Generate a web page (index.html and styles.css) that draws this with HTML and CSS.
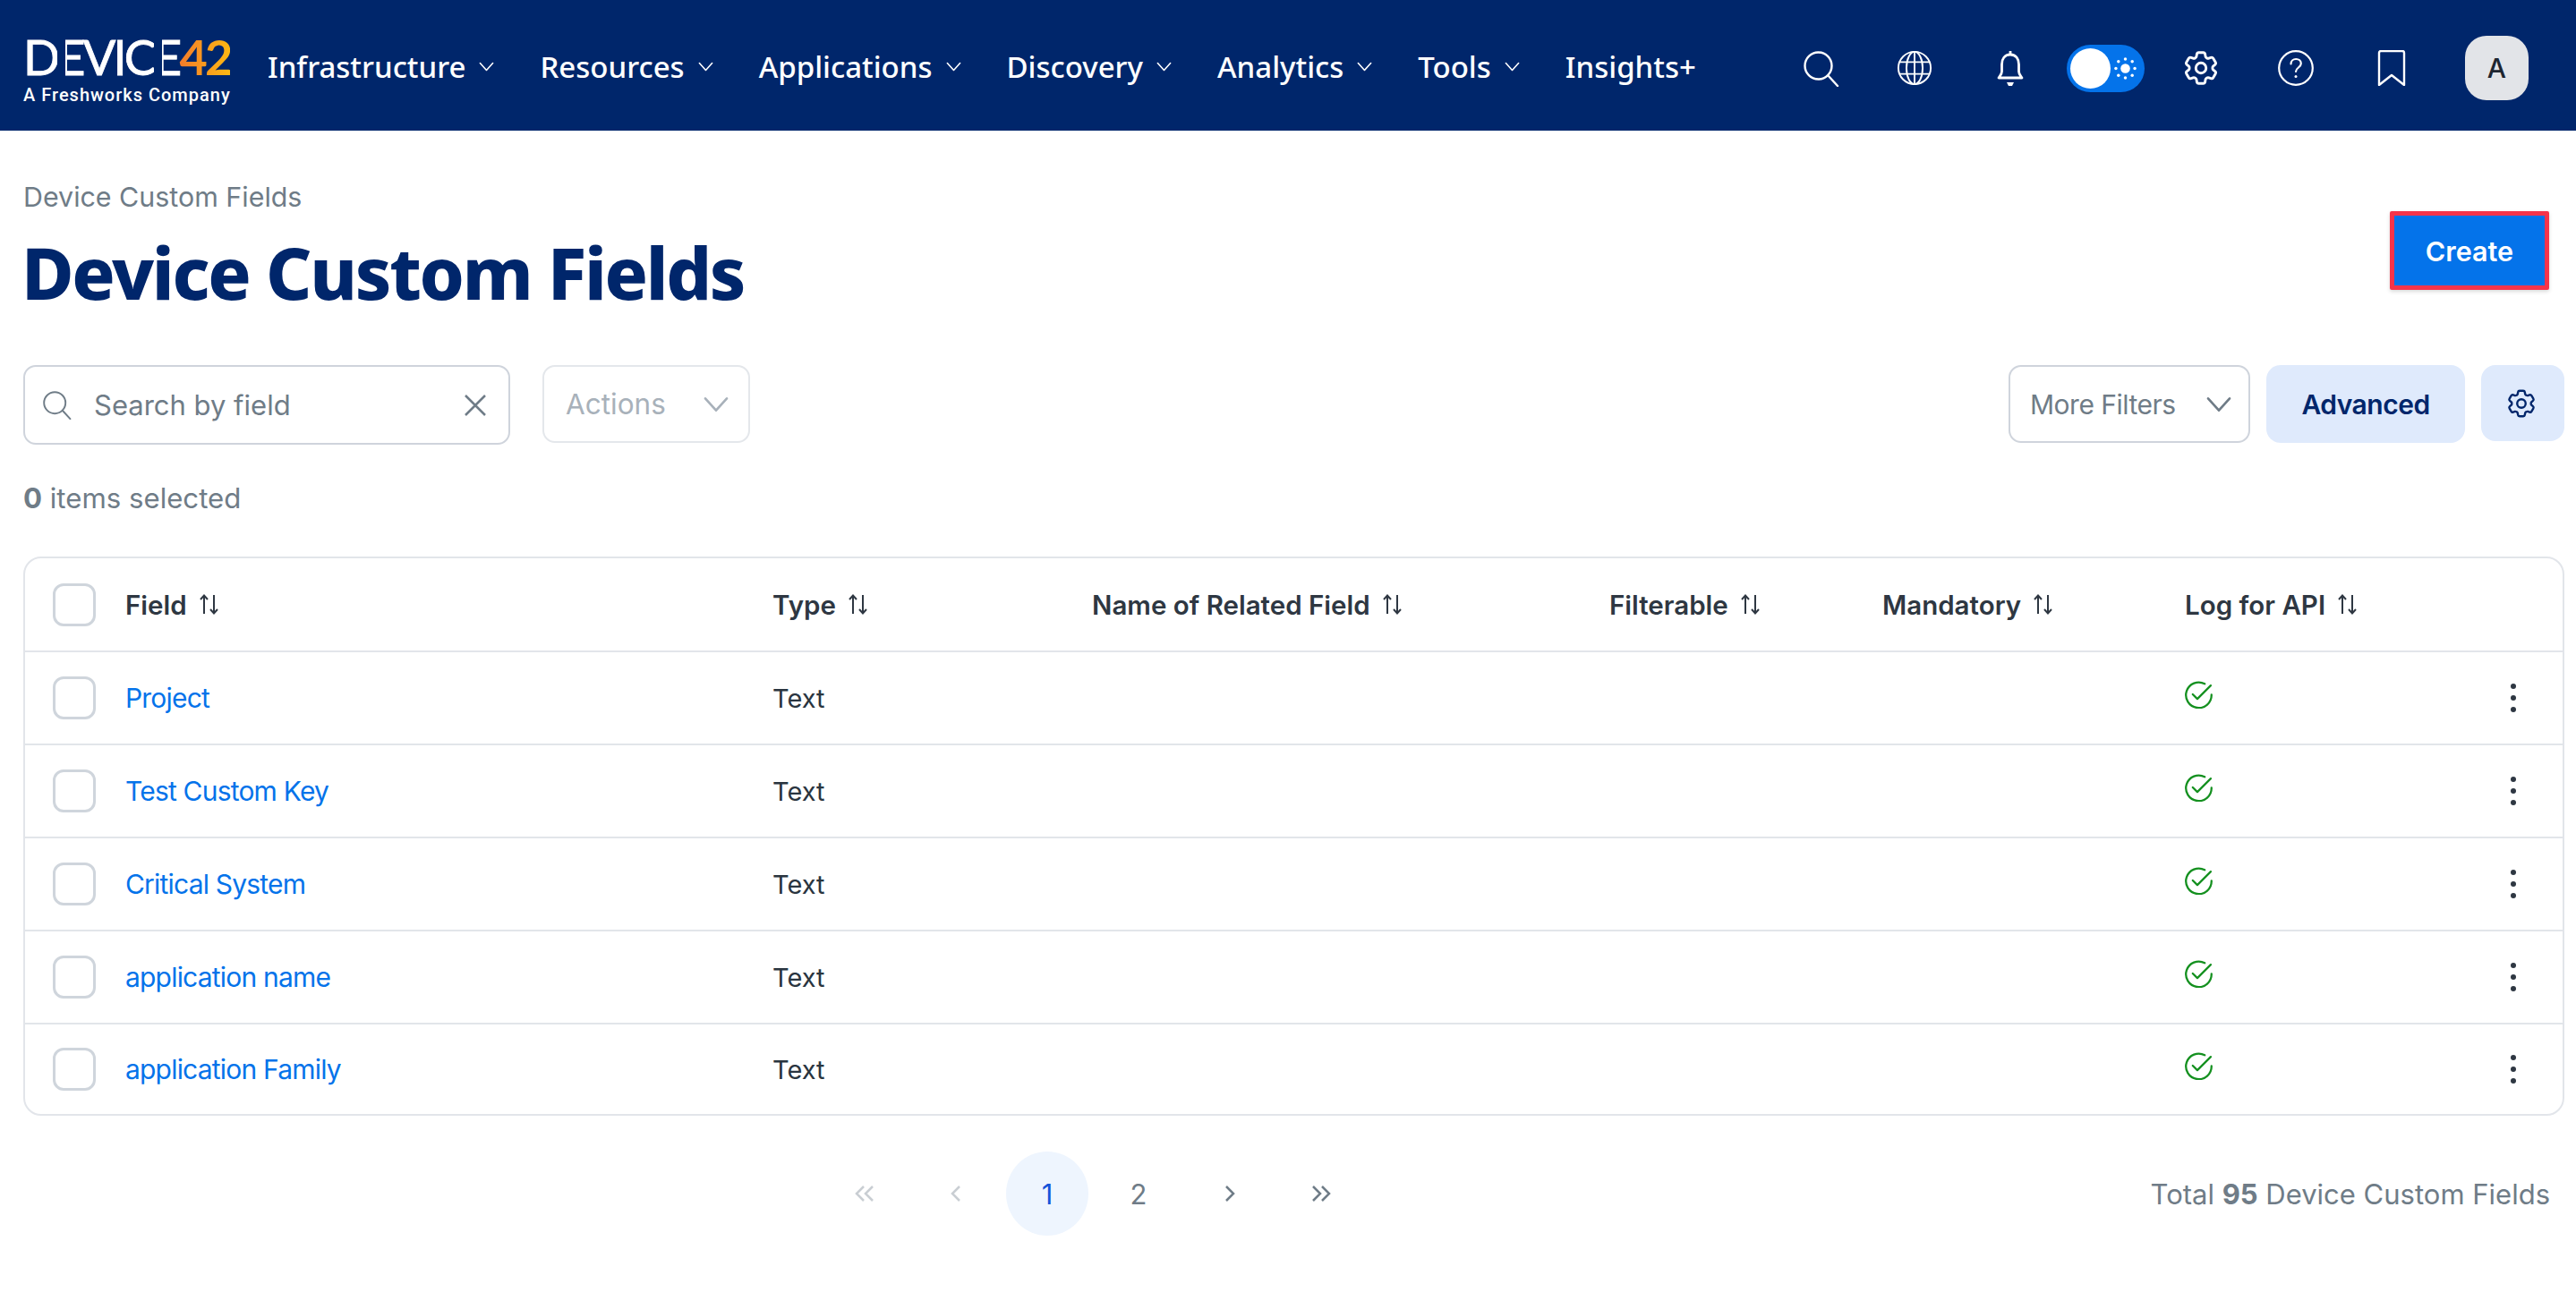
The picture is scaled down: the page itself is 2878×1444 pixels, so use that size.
FILE: index.html
```html
<!DOCTYPE html>
<html lang="en">
<head>
  <meta charset="UTF-8" />
  <title>Device Custom Fields</title>
  <link rel="stylesheet" href="styles.css">
</head>
<body>
  <svg class="sprites" width="0" height="0">
    <symbol id="i-gear" viewBox="0 0 24 24">
      <path d="M9.594 3.94c.09-.542.56-.94 1.11-.94h2.593c.55 0 1.02.398 1.11.94l.213 1.281c.063.374.313.686.645.87.074.04.147.083.22.127.325.196.72.257 1.075.124l1.217-.456a1.125 1.125 0 0 1 1.37.49l1.296 2.247a1.125 1.125 0 0 1-.26 1.431l-1.003.827c-.293.241-.438.613-.43.992a7.723 7.723 0 0 1 0 .255c-.008.378.137.75.43.991l1.004.827c.424.35.534.955.26 1.43l-1.298 2.247a1.125 1.125 0 0 1-1.369.491l-1.217-.456c-.355-.133-.75-.072-1.076.124a6.47 6.47 0 0 1-.22.128c-.331.183-.581.495-.644.869l-.213 1.281c-.09.543-.56.94-1.11.94h-2.594c-.55 0-1.019-.398-1.11-.94l-.213-1.281c-.062-.374-.312-.686-.644-.87a6.52 6.52 0 0 1-.22-.127c-.325-.196-.72-.257-1.076-.124l-1.217.456a1.125 1.125 0 0 1-1.369-.49l-1.297-2.247a1.125 1.125 0 0 1 .26-1.431l1.004-.827c.292-.24.437-.613.43-.991a6.932 6.932 0 0 1 0-.255c.007-.38-.138-.751-.43-.992l-1.004-.827a1.125 1.125 0 0 1-.26-1.43l1.297-2.247a1.125 1.125 0 0 1 1.37-.491l1.216.456c.356.133.751.072 1.076-.124.072-.044.146-.086.22-.128.332-.183.582-.495.644-.869l.214-1.28Z" fill="none" stroke="currentColor" stroke-width="1.5" stroke-linejoin="round"/>
      <circle cx="12" cy="12" r="3" fill="none" stroke="currentColor" stroke-width="1.5"/>
    </symbol>
    <symbol id="i-chev" viewBox="0 0 24 24">
      <path d="M3 7l9 10 9-10" fill="none" stroke="currentColor" stroke-width="2" stroke-linecap="round" stroke-linejoin="round"/>
    </symbol>
    <symbol id="i-search" viewBox="0 0 40 40">
      <circle cx="16.5" cy="16.5" r="15" fill="none" stroke="currentColor" stroke-width="2.4"/>
      <path d="M27.5 27.5L38 39" fill="none" stroke="currentColor" stroke-width="2.4" stroke-linecap="round"/>
    </symbol>
    <symbol id="i-sort" viewBox="0 0 21 23">
      <path d="M5 22V2M1 6l4-4.5L9 6M16 1v20M12 17l4 4.5 4-4.5" fill="none" stroke="currentColor" stroke-width="2"/>
    </symbol>
    <symbol id="i-check" viewBox="0 0 30 30">
      <path d="M21.5 3.2A13.8 13.8 0 1 0 28.8 15" fill="none" stroke="currentColor" stroke-width="2.2" stroke-linecap="round"/>
      <path d="M8.5 14.5l5 5L28 5" fill="none" stroke="currentColor" stroke-width="2.2" stroke-linecap="round" stroke-linejoin="round"/>
    </symbol>
    <symbol id="i-dots" viewBox="0 0 6 32">
      <circle cx="3" cy="3" r="3" fill="currentColor"/>
      <circle cx="3" cy="16" r="3" fill="currentColor"/>
      <circle cx="3" cy="29" r="3" fill="currentColor"/>
    </symbol>
  </svg>

  <!-- Top navigation -->
  <header class="nav">
    <div class="logo">
      <div class="logo-mark">D<span class="logo-e">E</span>VIC<span class="logo-e">E</span><span class="logo-num">42</span></div>
      <div class="logo-sub">A Freshworks Company</div>
    </div>
    <nav class="nav-menu">
      <a class="nav-link">Infrastructure <svg class="nav-chev"><use href="#i-chev"/></svg></a>
      <a class="nav-link">Resources <svg class="nav-chev"><use href="#i-chev"/></svg></a>
      <a class="nav-link">Applications <svg class="nav-chev"><use href="#i-chev"/></svg></a>
      <a class="nav-link">Discovery <svg class="nav-chev"><use href="#i-chev"/></svg></a>
      <a class="nav-link">Analytics <svg class="nav-chev"><use href="#i-chev"/></svg></a>
      <a class="nav-link">Tools <svg class="nav-chev"><use href="#i-chev"/></svg></a>
      <a class="nav-link">Insights+</a>
    </nav>
    <div class="nav-tools">
      <span class="nav-icon"><svg class="icon-40 icon-search"><use href="#i-search"/></svg></span>
      <span class="nav-icon">
        <svg class="icon-40" viewBox="0 0 40 42" fill="none" stroke="currentColor" stroke-width="2">
          <circle cx="20" cy="21" r="19"/>
          <ellipse cx="20" cy="21" rx="9.5" ry="19"/>
          <path d="M20 2v38M2.5 14h35M2.5 28h35"/>
        </svg>
      </span>
      <span class="nav-icon">
        <svg class="icon-40" viewBox="0 0 40 40" fill="none" stroke="currentColor" stroke-width="2.8" stroke-linejoin="round">
          <path d="M20 1v4"/>
          <path d="M20 5c-6.500 0-9.500 5-9.500 11v8c0 3-2 5-3.500 7h26c-1.500-2-3.500-4-3.500-7v-8c0-6-3-11-9.500-11z"/>
          <path d="M16 36h8l-2 4h-4z" fill="currentColor" stroke="none"/>
        </svg>
      </span>
      <span class="nav-icon">
        <span class="theme-toggle">
          <span class="toggle-knob"></span>
          <svg class="toggle-sun" viewBox="0 0 26 26" fill="#fff">
            <circle cx="13" cy="13" r="5.500"/>
            <circle cx="13" cy="2" r="1.800"/><circle cx="13" cy="24" r="1.800"/>
            <circle cx="2" cy="13" r="1.800"/><circle cx="24" cy="13" r="1.800"/>
            <circle cx="5" cy="5" r="1.800"/><circle cx="21" cy="5" r="1.800"/>
            <circle cx="5" cy="21" r="1.800"/><circle cx="21" cy="21" r="1.800"/>
          </svg>
        </span>
      </span>
      <span class="nav-icon"><svg class="icon-gear"><use href="#i-gear"/></svg></span>
      <span class="nav-icon">
        <svg class="icon-40" viewBox="0 0 40 40" fill="none" stroke="currentColor" stroke-width="2.200" stroke-linecap="round">
          <circle cx="20" cy="20" r="18.800"/>
          <path d="M14.500 15.500c0-3.500 2.500-5.500 5.700-5.500s5.600 2 5.600 5c0 4.500-5.800 4.500-5.800 9"/>
          <circle cx="20" cy="29.500" r="1.500" fill="currentColor" stroke="none"/>
        </svg>
      </span>
      <span class="nav-icon">
        <svg class="icon-40" viewBox="0 0 40 40" fill="none" stroke="currentColor" stroke-width="2.400" stroke-linejoin="round">
          <path d="M6 39V3c0-1 1-2 2-2h24c1 0 2 1 2 2v36L20 28z"/>
        </svg>
      </span>
      <span class="avatar">A</span>
    </div>
  </header>

  <main class="page">
    <div class="page-head">
      <div>
        <div class="crumb">Device Custom Fields</div>
        <h1 class="title">Device Custom Fields</h1>
      </div>
      <button class="create-btn">Create</button>
    </div>

    <!-- Toolbar -->
    <div class="toolbar">
      <div class="search-box">
        <svg class="search-icon"><use href="#i-search"/></svg>
        <span class="search-text">Search by field</span>
        <svg class="clear-icon" viewBox="0 0 26 26" fill="none" stroke="currentColor" stroke-width="2.500"><path d="M2 2l22 22M24 2L2 24"/></svg>
      </div>
      <div class="actions-select">
        <span>Actions</span>
        <svg class="select-chev"><use href="#i-chev"/></svg>
      </div>
      <div class="toolbar-right">
        <div class="filters-select">
          <span>More Filters</span>
          <svg class="select-chev"><use href="#i-chev"/></svg>
        </div>
        <button class="advanced-btn">Advanced</button>
        <button class="settings-btn"><svg class="icon-gear-sm"><use href="#i-gear"/></svg></button>
      </div>
    </div>

    <div class="selected"><b>0</b> items selected</div>

    <!-- Table -->
    <div class="table">
      <div class="row head">
        <span class="checkbox"></span>
        <span class="th">Field <svg class="sort"><use href="#i-sort"/></svg></span>
        <span class="th">Type <svg class="sort"><use href="#i-sort"/></svg></span>
        <span class="th">Name of Related Field <svg class="sort"><use href="#i-sort"/></svg></span>
        <span class="th">Filterable <svg class="sort"><use href="#i-sort"/></svg></span>
        <span class="th">Mandatory <svg class="sort"><use href="#i-sort"/></svg></span>
        <span class="th">Log for API <svg class="sort"><use href="#i-sort"/></svg></span>
        <span></span>
      </div>
      <div class="row">
        <span class="checkbox"></span><a class="link">Project</a><span>Text</span><span></span><span></span><span></span>
        <svg class="check"><use href="#i-check"/></svg><svg class="dots"><use href="#i-dots"/></svg>
      </div>
      <div class="row">
        <span class="checkbox"></span><a class="link">Test Custom Key</a><span>Text</span><span></span><span></span><span></span>
        <svg class="check"><use href="#i-check"/></svg><svg class="dots"><use href="#i-dots"/></svg>
      </div>
      <div class="row">
        <span class="checkbox"></span><a class="link">Critical System</a><span>Text</span><span></span><span></span><span></span>
        <svg class="check"><use href="#i-check"/></svg><svg class="dots"><use href="#i-dots"/></svg>
      </div>
      <div class="row">
        <span class="checkbox"></span><a class="link">application name</a><span>Text</span><span></span><span></span><span></span>
        <svg class="check"><use href="#i-check"/></svg><svg class="dots"><use href="#i-dots"/></svg>
      </div>
      <div class="row">
        <span class="checkbox"></span><a class="link">application Family</a><span>Text</span><span></span><span></span><span></span>
        <svg class="check"><use href="#i-check"/></svg><svg class="dots"><use href="#i-dots"/></svg>
      </div>
    </div>

    <!-- Pagination -->
    <div class="pager-row">
      <div class="pager">
        <span class="page-btn muted">
          <svg class="pg-icon" viewBox="0 0 24 20" fill="none" stroke="currentColor" stroke-width="2.500"><path d="M11 2L3 10l8 8M21 2l-8 8 8 8"/></svg>
        </span>
        <span class="page-btn muted">
          <svg class="pg-icon" viewBox="0 0 24 20" fill="none" stroke="currentColor" stroke-width="2.500"><path d="M16 2l-8 8 8 8"/></svg>
        </span>
        <span class="page-btn current">1</span>
        <span class="page-btn">2</span>
        <span class="page-btn">
          <svg class="pg-icon" viewBox="0 0 24 20" fill="none" stroke="currentColor" stroke-width="2.500"><path d="M8 2l8 8-8 8"/></svg>
        </span>
        <span class="page-btn">
          <svg class="pg-icon" viewBox="0 0 24 20" fill="none" stroke="currentColor" stroke-width="2.500"><path d="M3 2l8 8-8 8M13 2l8 8-8 8"/></svg>
        </span>
      </div>
      <div class="total">Total <b>95</b> Device Custom Fields</div>
    </div>
  </main>
</body>
</html>
```

FILE: styles.css
```css
/* General reset and font */
* {
  box-sizing: border-box;
}

body {
  margin: 0;
  font-family: 'Inter', sans-serif;
  font-size: 30px;
  color: #2a3540;
  background: #fff;
  overflow: hidden;
}

.sprites {
  position: absolute;
}

/* Top navigation */
.nav {
  display: flex;
  align-items: center;
  height: 146px;
  padding: 0 53px 0 26px;
  background: #00266b;
  color: #fff;
}

.logo {
  width: 273px;
  flex: none;
  padding-top: 14px;
}

.logo-mark {
  font-family: 'Lato', sans-serif;
  font-size: 54px;
  line-height: 46px;
  letter-spacing: -2.800px;
  white-space: nowrap;
  -webkit-text-stroke: 0.8px #fff;
}

.logo-e {
  position: relative;
  display: inline-block;
}

/* hides the stem of the E so only the three bars are left */
.logo-e::before {
  content: "";
  position: absolute;
  left: 0;
  top: 0;
  bottom: 0;
  width: 9px;
  background: #00266b;
}

.logo-num {
  font-weight: 700;
  background: linear-gradient(90deg, #f47b2a, #fdb813);
  -webkit-background-clip: text;
  background-clip: text;
  color: transparent;
  -webkit-text-stroke: 0;
}

.logo-sub {
  font-family: 'Roboto', sans-serif;
  font-size: 20px;
  font-weight: 500;
  line-height: 26px;
  letter-spacing: 1px;
  margin-top: 6px;
}

.nav-menu {
  display: flex;
  gap: 50px;
  font-family: 'Noto Sans', sans-serif;
  font-size: 33px;
  font-weight: 500;
  white-space: nowrap;
  padding-top: 3px;
}

.nav-link {
  display: flex;
  align-items: center;
  gap: 14px;
}

.nav-chev {
  width: 19px;
  height: 19px;
}

.nav-tools {
  display: flex;
  align-items: center;
  margin-left: auto;
  padding-top: 6px;
}

.nav-icon {
  display: flex;
  justify-content: center;
  align-items: center;
  width: 106.500px;
}

.icon-40 {
  width: 40px;
  height: 40px;
}

.icon-search {
  margin: 2px 0 0 4px;
}

.icon-gear {
  width: 46px;
  height: 46px;
}

.theme-toggle {
  display: flex;
  align-items: center;
  justify-content: space-between;
  width: 87px;
  height: 53px;
  padding: 0 9px 0 4px;
  border-radius: 27px;
  background: #0473ea;
}

.toggle-knob {
  width: 45px;
  height: 45px;
  border-radius: 50%;
  background: #fff;
}

.toggle-sun {
  width: 25px;
  height: 25px;
}

.avatar {
  display: flex;
  justify-content: center;
  align-items: center;
  width: 71px;
  height: 72px;
  margin-left: 29px;
  border-radius: 24px;
  background: #e2e4e8;
  color: #1d2530;
  font-size: 30px;
  font-weight: 500;
}

/* Page */
.page {
  padding: 0 15px 0 26px;
}

.page-head {
  display: flex;
  justify-content: space-between;
  align-items: flex-start;
  height: 262px;
  padding-top: 56px;
}

.crumb {
  font-size: 30.400px;
  line-height: 36px;
  color: #6f7c87;
}

.title {
  margin: 19px 0 0 -2px;
  font-family: 'Noto Sans', sans-serif;
  font-size: 80px;
  font-weight: 800;
  line-height: 94px;
  letter-spacing: -2.300px;
  color: #00266b;
}

.create-btn {
  width: 178px;
  height: 88px;
  margin: 34px 15px 0 0;
  border: 5px solid #f5344a;
  border-radius: 2px;
  background: #0473ea;
  color: #fff;
  font: 600 30.500px 'Inter', sans-serif;
  box-shadow: 0 2px 4px rgba(0, 0, 0, 0.15);
}

/* Toolbar */
.toolbar {
  display: flex;
  align-items: flex-start;
  gap: 36px;
  margin-right: -2px;
}

.search-box {
  display: flex;
  align-items: center;
  width: 544px;
  height: 89px;
  padding: 0 24px 0 20px;
  border: 2px solid #cfd4dc;
  border-radius: 14px;
  color: #6f7c87;
  font-size: 31px;
}

.search-icon {
  width: 32px;
  height: 32px;
  flex: none;
}

.search-text {
  margin-left: 25px;
  flex: 1;
}

.clear-icon {
  width: 26px;
  height: 26px;
  flex: none;
}

.actions-select,
.filters-select {
  display: flex;
  justify-content: space-between;
  align-items: center;
  height: 87px;
  border-radius: 14px;
}

.actions-select {
  width: 232px;
  padding: 0 20px 0 24px;
  border: 2px solid #e4e7eb;
  color: #a8b1ba;
  font-size: 31.500px;
}

.select-chev {
  width: 32px;
  height: 32px;
}

.toolbar-right {
  display: flex;
  align-items: flex-start;
  gap: 18px;
  margin-left: auto;
}

.filters-select {
  width: 270px;
  padding: 0 17px 0 22px;
  border: 2px solid #cfd4dc;
  color: #6f7c87;
  letter-spacing: -0.5px;
}

.advanced-btn,
.settings-btn {
  height: 87px;
  border: 0;
  border-radius: 16px;
  background: #dfeafc;
  color: #00266b;
}

.advanced-btn {
  width: 222px;
  font: 600 30px 'Inter', sans-serif;
  letter-spacing: -0.5px;
}

.settings-btn {
  display: flex;
  justify-content: center;
  align-items: center;
  width: 93px;
  height: 85px;
  padding: 0 4px 0 0;
}

.icon-gear-sm {
  width: 38px;
  height: 38px;
}

.selected {
  margin-top: 42px;
  font-size: 31.200px;
  line-height: 36px;
  color: #6f7c87;
}

/* Table */
.table {
  margin: 47px -2px 0 0;
  border: 2px solid #e2e5ea;
  border-radius: 20px;
}

.row {
  display: grid;
  grid-template-columns: 112px 723px 357px 578px 305px 338px 1fr 72px;
  align-items: center;
  height: 104px;
  border-top: 2px solid #e2e5ea;
  font-size: 29px;
  white-space: nowrap;
}

.row:last-child {
  height: 102px;
}

.row.head {
  border-top: 0;
  height: 103px;
}

.checkbox {
  width: 48px;
  height: 48px;
  margin-left: 31px;
  border: 3px solid #cfd5dc;
  border-radius: 12px;
}

.th {
  display: flex;
  align-items: center;
  gap: 14px;
  font-size: 29.500px;
  font-weight: 600;
  color: #2e3742;
}

.sort {
  width: 21px;
  height: 23px;
}

.link {
  color: #0473ea;
  font-size: 30px;
  letter-spacing: -0.800px;
}

.check {
  width: 31px;
  height: 31px;
  margin-bottom: 8px;
  color: #14901f;
}

.dots {
  width: 6px;
  height: 32px;
  margin-left: 14px;
  color: #2e3742;
}

/* Pagination */
.pager-row {
  position: relative;
  display: flex;
  justify-content: flex-end;
  align-items: center;
  height: 94px;
  margin-top: 40px;
  font-size: 31px;
}

.pager {
  position: absolute;
  left: 889px;
  top: 0;
  display: flex;
}

.page-btn {
  display: flex;
  justify-content: center;
  align-items: center;
  width: 102px;
  height: 94px;
  color: #6f7c87;
}

.page-btn.muted {
  color: #c9ced3;
}

.page-btn.current {
  position: relative;
  color: #1553d9;
  z-index: 0;
}

.page-btn.current::before {
  content: "";
  position: absolute;
  left: 5px;
  top: 0;
  width: 92px;
  height: 94px;
  border-radius: 50%;
  background: #eef5fe;
  z-index: -1;
}

.pg-icon {
  width: 24px;
  height: 20px;
}

.total {
  margin-right: 14px;
  color: #6f7c87;
}
```
